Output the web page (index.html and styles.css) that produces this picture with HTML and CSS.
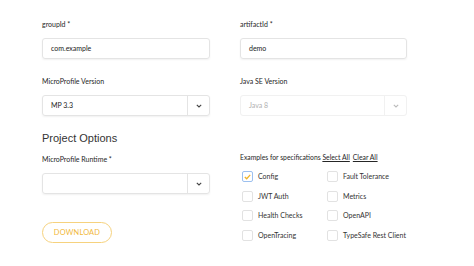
FILE: index.html
```html
<!DOCTYPE html>
<html>
<head>
<meta charset="utf-8">
<link rel="stylesheet" href="styles.css">
</head>
<body>
<div class="form">
  <div class="row first">
    <div class="field">
      <label class="lbl">groupId *</label>
      <div class="input">com.example</div>
    </div>
    <div class="field">
      <label class="lbl">artifactId *</label>
      <div class="input">demo</div>
    </div>
  </div>
  <div class="row second">
    <div class="field">
      <label class="lbl">MicroProfile Version</label>
      <div class="select"><span class="val">MP 3.3</span><span class="arrow"><svg width="6" height="4" viewBox="0 0 6 4"><polyline points="0.8,0.8 3,3 5.2,0.8" fill="none" stroke="#444" stroke-width="1.1"/></svg></span></div>
    </div>
    <div class="field">
      <label class="lbl">Java SE Version</label>
      <div class="select disabled"><span class="val">Java 8</span><span class="arrow"><svg width="6" height="4" viewBox="0 0 6 4"><polyline points="0.8,0.8 3,3 5.2,0.8" fill="none" stroke="#bbb" stroke-width="1.1"/></svg></span></div>
    </div>
  </div>
  <h2 class="heading">Project Options</h2>
  <div class="row third">
    <div class="field">
      <label class="lbl">MicroProfile Runtime *</label>
      <div class="select runtime"><span class="val"></span><span class="arrow"><svg width="6" height="4" viewBox="0 0 6 4"><polyline points="0.8,0.8 3,3 5.2,0.8" fill="none" stroke="#444" stroke-width="1.1"/></svg></span></div>
      <button class="download">DOWNLOAD</button>
    </div>
    <div class="field specs">
      <div class="spec-head">Examples for specifications <a class="link">Select All</a><a class="link">Clear All</a></div>
      <div class="checks">
        <div class="check"><span class="box checked"><svg width="7" height="6" viewBox="0 0 7 6"><polyline points="0.8,3 2.7,4.8 6.2,0.9" fill="none" stroke="#f0b429" stroke-width="1.3"/></svg></span>Config</div>
        <div class="check"><span class="box"></span>Fault Tolerance</div>
        <div class="check"><span class="box"></span>JWT Auth</div>
        <div class="check"><span class="box"></span>Metrics</div>
        <div class="check"><span class="box"></span>Health Checks</div>
        <div class="check"><span class="box"></span>OpenAPI</div>
        <div class="check"><span class="box"></span>OpenTracing</div>
        <div class="check"><span class="box"></span>TypeSafe Rest Client</div>
      </div>
    </div>
  </div>
</div>
</body>
</html>
```

FILE: styles.css
```css
html, body {
  margin: 0;
  padding: 0;
  background: #fff;
}
body {
  font-family: Lato, "Open Sans", sans-serif;
  color: #333;
}
.form {
  width: 365px;
  padding: 19px 0 0 42px;
}
.row {
  display: grid;
  grid-template-columns: 168px 167px;
  column-gap: 30px;
}
.row.second {
  margin-top: 17px;
}
.field {
  display: flex;
  flex-direction: column;
}
.lbl {
  font-size: 7px;
  line-height: 10px;
  height: 10px;
  color: #262626;
  margin-bottom: 9px;
}
.input, .select {
  box-sizing: border-box;
  height: 21px;
  border: 1px solid #e4e4e4;
  border-radius: 3px;
  box-shadow: 0 1px 2px rgba(0, 0, 0, 0.06);
  font-size: 7px;
  line-height: 19px;
  color: #222;
}
.input {
  padding-left: 8px;
}
.select {
  display: flex;
}
.select .val {
  flex: 1;
  padding-left: 8px;
}
.select .arrow {
  width: 21px;
  border-left: 1px solid #e4e4e4;
  display: flex;
  align-items: center;
  justify-content: center;
}
.select.disabled {
  border-color: #f1f1f1;
  box-shadow: none;
  color: #b0b0b0;
}
.select.disabled .arrow {
  border-left-color: #f1f1f1;
}
.heading {
  margin: 15px 0 0;
  font-family: "Liberation Sans", Arial, sans-serif;
  font-weight: normal;
  font-size: 11px;
  line-height: 14px;
  color: #333;
}
.row.third {
  margin-top: 9px;
}
.download {
  margin-top: 28px;
  align-self: flex-start;
  width: 70px;
  height: 21px;
  box-sizing: border-box;
  border: 1px solid #f6d27e;
  border-radius: 11px;
  background: #fff;
  color: #f1b83a;
  font-family: Lato, sans-serif;
  font-size: 7.4px;
  letter-spacing: 0.2px;
  padding: 0;
}
.specs {
  margin-top: -2px;
}
.spec-head {
  font-size: 6.8px;
  line-height: 10px;
  height: 10px;
  color: #262626;
  margin-bottom: 9px;
}
.link {
  text-decoration: underline;
  color: #262626;
  margin-right: 3px;
}
.checks {
  display: grid;
  grid-template-columns: 85px 85px;
  row-gap: 8.6px;
  padding-left: 2px;
}
.check {
  display: flex;
  align-items: center;
  gap: 5px;
  font-size: 7px;
  line-height: 11px;
  color: #333;
}
.box {
  box-sizing: border-box;
  width: 11px;
  height: 11px;
  border: 1px solid #e2e2e2;
  border-radius: 2px;
  display: flex;
  align-items: center;
  justify-content: center;
  flex: none;
}
.box.checked {
  border-color: #9cc0ef;
}
```
